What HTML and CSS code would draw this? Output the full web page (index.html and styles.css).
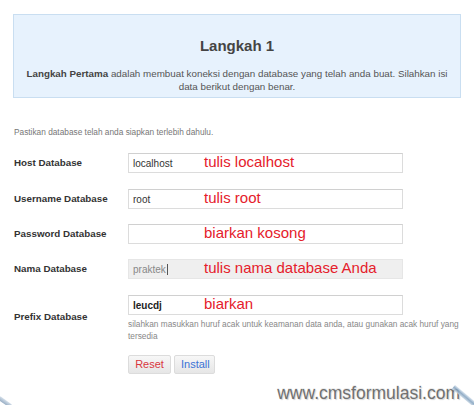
FILE: index.html
```html
<!DOCTYPE html>
<html>
<head>
<meta charset="utf-8">
<link rel="stylesheet" href="styles.css">
</head>
<body>
<div class="page">
  <div class="info">
    <h1 class="title">Langkah 1</h1>
    <p class="lead"><b>Langkah Pertama</b> adalah membuat koneksi dengan database yang telah anda buat. Silahkan isi data berikut dengan benar.</p>
  </div>
  <p class="note">Pastikan database telah anda siapkan terlebih dahulu.</p>
  <div class="form">
    <div class="row r1">
      <div class="label">Host Database</div>
      <div class="field"><span class="val">localhost</span><span class="anno">tulis localhost</span></div>
    </div>
    <div class="row r2">
      <div class="label">Username Database</div>
      <div class="field"><span class="val">root</span><span class="anno">tulis root</span></div>
    </div>
    <div class="row r3">
      <div class="label">Password Database</div>
      <div class="field"><span class="val"></span><span class="anno">biarkan kosong</span></div>
    </div>
    <div class="row r4">
      <div class="label">Nama Database</div>
      <div class="field disabled"><span class="val">praktek<span class="caret"></span></span><span class="anno">tulis nama database Anda</span></div>
    </div>
    <div class="row r5">
      <div class="label lbl-prefix">Prefix Database</div>
      <div class="col">
        <div class="field"><span class="val dark">leucdj</span><span class="anno">biarkan</span></div>
        <p class="help">silahkan masukkan huruf acak untuk keamanan data anda, atau gunakan acak huruf yang tersedia</p>
      </div>
    </div>
    <div class="buttons">
      <button class="btn reset">Reset</button>
      <button class="btn install">Install</button>
    </div>
  </div>
  <div class="watermark">www.cmsformulasi.com</div>
  <div class="corner-br"></div>
  <div class="corner-bl"></div>
</div>
</body>
</html>
```
FILE: styles.css
```css
html, body {
  margin: 0;
  padding: 0;
  background: #fff;
}
body {
  font-family: "Liberation Sans", Arial, sans-serif;
  color: #444;
}
.page {
  position: relative;
  width: 474px;
  height: 405px;
  overflow: hidden;
}
.info {
  margin: 14px 13px 0 13px;
  height: 84px;
  box-sizing: border-box;
  border: 1px solid #c9def1;
  background: #e7f2fd;
  text-align: center;
  padding-top: 22px;
}
.title {
  margin: 0;
  font-size: 15px;
  font-weight: bold;
  color: #444;
  line-height: 18px;
}
.lead {
  margin: 12px 12px 0;
  font-size: 9.8px;
  line-height: 13px;
  color: #555;
}
.lead b {
  color: #444;
}
.note {
  margin: 29px 0 0 14px;
  font-size: 8.3px;
  color: #777;
  line-height: 10px;
}
.form {
  margin-top: 16px;
}
.row {
  display: flex;
  align-items: center;
  height: 20px;
}
.r2, .r3, .r4 { margin-top: 15px; }
.r2 { margin-top: 16px; }
.r5 { margin-top: 16px; align-items: flex-start; height: auto; }
.label {
  width: 114px;
  padding-left: 14px;
  font-size: 9.8px;
  font-weight: bold;
  color: #333;
  line-height: 20px;
}
.lbl-prefix {
  margin-top: 12px;
}
.field {
  width: 275px;
  height: 20px;
  box-sizing: border-box;
  border: 1px solid #dcdcdc;
  border-top-color: #d0d0d0;
  background: #fff;
  display: flex;
  align-items: center;
}
.field.disabled {
  background: #efefef;
  border-color: #e6e6e6;
}
.val {
  width: 75px;
  padding-left: 4px;
  box-sizing: border-box;
  font-size: 10px;
  color: #333;
  flex-shrink: 0;
  display: flex;
  align-items: center;
}
.disabled .val {
  color: #888;
}
.val.dark {
  color: #222;
  font-weight: 600;
}
.caret {
  display: inline-block;
  width: 1px;
  height: 11px;
  background: #555;
  margin-left: 1px;
}
.anno {
  font-size: 15px;
  color: #e5202b;
  line-height: 18px;
  margin-top: -3px;
  white-space: nowrap;
}
.help {
  margin: 3px 0 0 0;
  width: 345px;
  font-size: 8.3px;
  line-height: 12px;
  color: #888;
}
.buttons {
  display: flex;
  gap: 3px;
  margin: 13px 0 0 128px;
}
.btn {
  font-family: "Liberation Sans", Arial, sans-serif;
  font-size: 11px;
  height: 19px;
  padding: 0 6px;
  border: 1px solid #dcdcdc;
  border-radius: 2px;
  background: linear-gradient(#f7f7f7, #e6e6e6);
  line-height: 17px;
}
.reset {
  width: 43px;
  color: #d9363e;
}
.install {
  width: 41px;
  color: #3b73d6;
}
.watermark {
  margin: 9px 14px 0 0;
  text-align: right;
  font-size: 17.5px;
  color: #707070;
  line-height: 20px;
  text-shadow: 0 -1px 0 #ececec, 1px 1px 1px #d4d4d4;
}
.corner-br {
  position: absolute;
  right: -6px;
  bottom: 6px;
  width: 30px;
  height: 5px;
  background: linear-gradient(#d6e2ed, #7f9fbd 50%, #c9d7e4);
  transform: rotate(40deg);
  opacity: 0.85;
}
.corner-bl {
  position: absolute;
  left: -2px;
  bottom: 1px;
  width: 14px;
  height: 4px;
  background: linear-gradient(#c8d6e4, #7f9ab6);
  transform: rotate(35deg);
  opacity: 0.8;
}
```
